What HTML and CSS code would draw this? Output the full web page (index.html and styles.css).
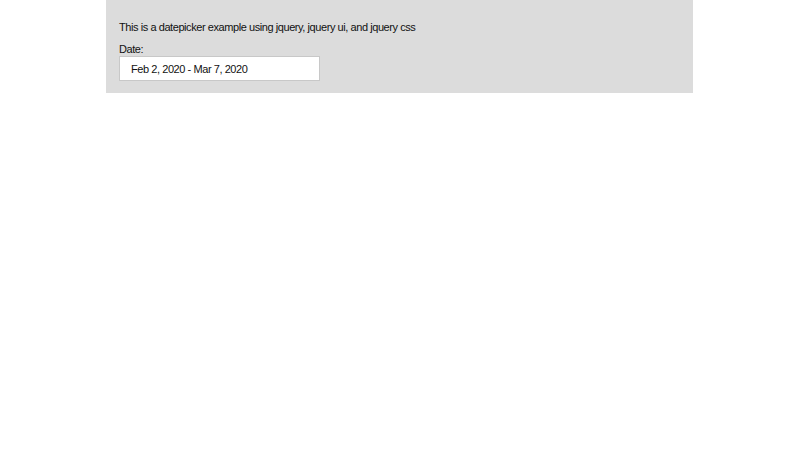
FILE: index.html
```html
<!DOCTYPE html>
<html>
<head>
<meta charset="utf-8">
<link rel="stylesheet" href="styles.css">
</head>
<body>
<div class="panel">
  <p class="intro">This is a datepicker example using jquery, jquery ui, and jquery css</p>
  <label class="lbl" for="d">Date:</label>
  <input id="d" class="field" type="text" value="Feb 2, 2020 - Mar 7, 2020">
</div>
</body>
</html>
```
FILE: styles.css
```css
html, body { margin: 0; padding: 0; background: #fff; }
body { font-family: "Liberation Sans", Arial, sans-serif; font-size: 11px; letter-spacing: -0.43px; color: #111; }
.panel {
  width: 587px;
  margin: 0 0 0 106px;
  box-sizing: border-box;
  background: #dcdcdc;
  padding: 20px 12px 12px 13px;
  height: 93px;
}
.intro { margin: 0 0 8px 0; line-height: 14px; }
.lbl { display: block; line-height: 14px; margin-bottom: 0; }
.field {
  display: block;
  box-sizing: border-box;
  width: 201px;
  height: 25px;
  border: 1px solid #c8c8c8;
  background: #fff;
  padding: 0 11px;
  font-family: "Liberation Sans", Arial, sans-serif;
  font-size: 11px;
  letter-spacing: -0.43px;
  color: #111;
  margin: 0;
}
```
